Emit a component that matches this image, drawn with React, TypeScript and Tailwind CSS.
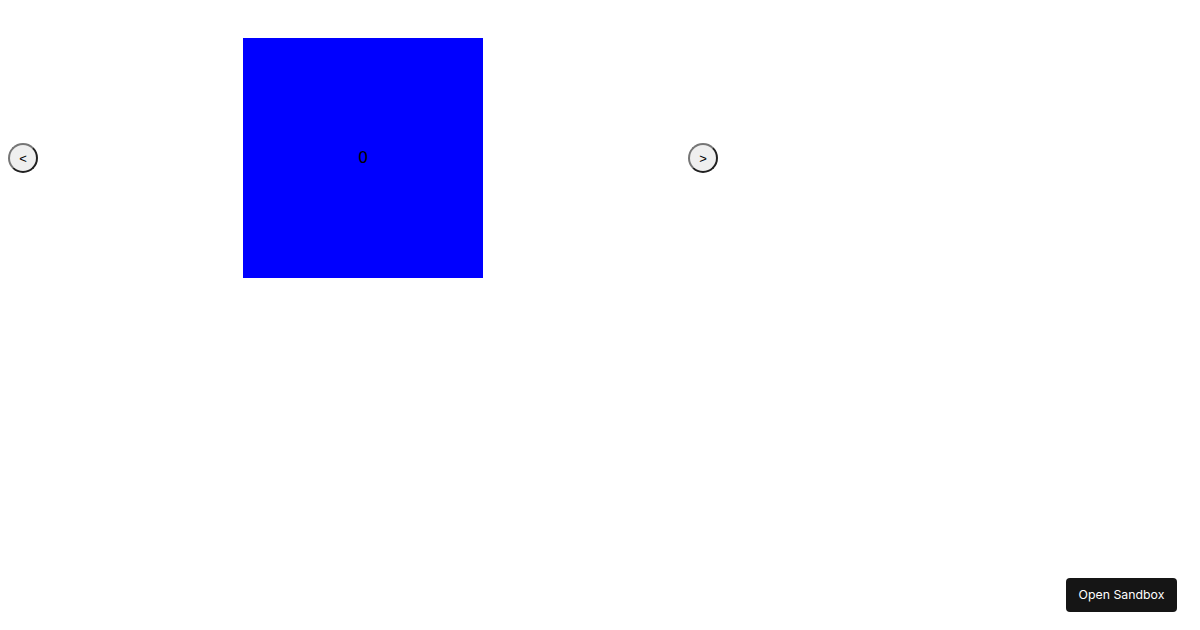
export default function App() {
  return (
    <div className="relative w-[1200px] h-[630px] bg-white overflow-hidden">
      <div className="p-[8px]">
        <div className="flex items-center w-[710px]">
          <button className="w-[30px] h-[30px] rounded-full bg-[#efefef] border-2 [border-style:outset] border-[#767676] text-[13px] leading-none text-black flex items-center justify-center font-['Liberation_Sans',sans-serif]">
            &lt;
          </button>
          <div className="w-[650px] py-[30px] flex justify-center">
            <div className="w-[240px] h-[240px] bg-[#0000ff] flex items-center justify-center text-black text-[16px] font-['DejaVu_Sans',sans-serif]">
              0
            </div>
          </div>
          <button className="w-[30px] h-[30px] rounded-full bg-[#efefef] border-2 [border-style:outset] border-[#767676] text-[13px] leading-none text-black flex items-center justify-center font-['Liberation_Sans',sans-serif]">
            &gt;
          </button>
        </div>
      </div>
      <button className="absolute left-[1066px] top-[578px] w-[111px] h-[34px] rounded-[4px] bg-[#151515] text-white text-[12.3px] font-['Inter',sans-serif] flex items-center justify-center">
        Open Sandbox
      </button>
    </div>
  );
}
